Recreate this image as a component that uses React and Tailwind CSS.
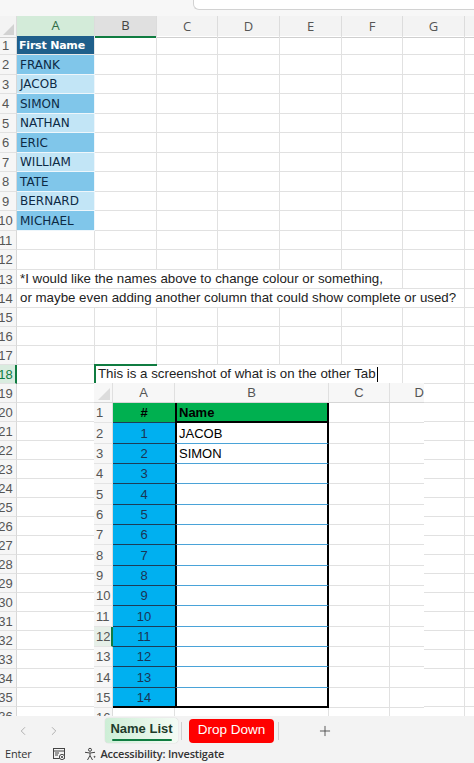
import React from "react";
import { ChevronLeft, ChevronRight, Plus } from "lucide-react";

const GRID = "grid grid-cols-[17px_78px_62px_61px_62px_62px_61px_62px_60px]";
const SPAN = {
  1: "col-span-1",
  2: "col-span-2",
  3: "col-span-3",
  4: "col-span-4",
  5: "col-span-5",
  6: "col-span-6",
  7: "col-span-7",
  8: "col-span-8",
};

const NAMES = ["FRANK", "JACOB", "SIMON", "NATHAN", "ERIC", "WILLIAM", "TATE", "BERNARD", "MICHAEL"];
const LETTERS = ["A", "B", "C", "D", "E", "F", "G", ""];

const cellBase = "h-full border-r border-b border-[#e1e1e1]";
const textCls = "pl-[3px] whitespace-nowrap text-[#222] text-[13.3px] leading-[16px]";

// build the cells of one outer row: [{span, node, cls}]
function rowCells(r) {
  const blanks = (n) => Array.from({ length: n }, () => ({ span: 1 }));
  if (r === 1) {
    return [
      {
        span: 1,
        cls: "bg-[#1f5f8b] border-[#e8e8e8]",
        node: (
          <span className="pl-[2px] whitespace-nowrap text-white font-bold text-[11px] tracking-[-0.2px] font-['DejaVu_Sans',sans-serif]">
            First Name
          </span>
        ),
      },
      ...blanks(7),
    ];
  }
  if (r >= 2 && r <= 10) {
    const even = r % 2 === 0;
    return [
      {
        span: 1,
        cls: (even ? "bg-[#80c6ea]" : "bg-[#c2e5f6]") + " border-[#eef6fb]",
        node: (
          <span className="pl-[3px] whitespace-nowrap text-[#0d2a45] text-[12px] font-['DejaVu_Sans',sans-serif]">
            {NAMES[r - 2]}
          </span>
        ),
      },
      ...blanks(7),
    ];
  }
  if (r === 13) {
    return [
      { span: 6, node: <span className={textCls}>*I would like the names above to change colour or something,</span> },
      ...blanks(2),
    ];
  }
  if (r === 14) {
    return [
      { span: 7, node: <span className={textCls}>or maybe even adding another column that could show complete or used?</span> },
      ...blanks(1),
    ];
  }
  if (r === 18) {
    return [
      { span: 1 },
      {
        span: 5,
        cls: "relative",
        node: (
          <>
            <div className="absolute left-[-1px] top-[-1px] w-[63px] h-[22px] border-t-2 border-l-2 border-[#107c41]" />
            <span className={textCls + " flex items-center"}>
              This is a screenshot of what is on the other Tab
              <span className="inline-block w-px h-[15px] bg-black ml-px" />
            </span>
          </>
        ),
      },
      ...blanks(2),
    ];
  }
  return blanks(8);
}

function OuterRow({ r }) {
  const sel = r === 18;
  const h = r % 2 === 0 && r <= 12 ? "h-[20px]" : "h-[19px]";
  return (
    <div className={GRID + " grid-rows-1 leading-none " + h}>
      <div
        className={
          "h-full overflow-hidden border-b border-[#e1e1e1] flex items-center " +
          (sel
            ? "bg-[#d9ecdf] border-r-2 border-r-[#107c41] text-[#107c41]"
            : "bg-[#f6f6f6] border-r border-r-[#d8d8d8] text-[#555]")
        }
      >
        <div className="w-[11px] shrink-0 flex justify-center text-[13px] leading-none">
          <span className="whitespace-nowrap">{r}</span>
        </div>
      </div>
      {rowCells(r).map((c, i) => (
        <div key={i} className={cellBase + " flex items-center overflow-visible " + SPAN[c.span] + " " + (c.cls || "")}>
          {c.node}
        </div>
      ))}
    </div>
  );
}

const EGRID = "grid grid-cols-[19px_62px_154px_61px_34px] grid-rows-1 leading-none";

function EmbeddedRow({ r }) {
  const head = r === 1;
  const last = r === 15;
  const sel = r === 12;
  const beyond = r > 15;
  const h = r % 3 === 2 ? "h-[21px]" : "h-[20px]";
  let aCls = "bg-[#00b0f0] border-b border-[#1d3d57]";
  let bCls = "bg-white border-b border-b-[#4aa3d8] border-l-2 border-r-2 border-l-black border-r-black";
  if (head) {
    aCls = "bg-[#00b050] border-b border-[#1d3d57]";
    bCls = "bg-[#00b050] border-b-2 border-b-black border-l-2 border-r-2 border-l-black border-r-black";
  }
  if (last) {
    aCls = "bg-[#00b0f0] border-b-2 border-black";
    bCls = "bg-white border-b-2 border-black border-l-2 border-r-2";
  }
  if (beyond) {
    aCls = "bg-white border-r border-b border-[#e1e1e1]";
    bCls = "bg-white border-r border-b border-[#e1e1e1]";
  }
  return (
    <div className={EGRID + " " + h}>
      <div
        className={
          "h-full flex items-center pl-[2px] text-[13px] text-[#555] border-b border-[#e4e4e4] " +
          (sel ? "bg-[#e6efe8] border-r-2 border-r-[#107c41]" : "bg-[#f7f7f7] border-r border-r-[#dcdcdc]")
        }
      >
        {r}
      </div>
      <div className={"h-full flex items-center justify-center text-[13px] " + aCls}>
        {head ? (
          <span className="font-bold text-black">#</span>
        ) : beyond ? null : (
          <span className="text-[#1a3556]">{r - 1}</span>
        )}
      </div>
      <div className={"h-full flex items-center pl-[2px] text-[13px] " + bCls}>
        {head ? <span className="font-bold text-black">Name</span> : r === 2 ? "JACOB" : r === 3 ? "SIMON" : null}
      </div>
      <div className="h-full border-r border-b border-[#e1e1e1]" />
      <div className="h-full border-b border-[#e1e1e1]" />
    </div>
  );
}

function Embedded() {
  return (
    <div className="absolute left-[94px] top-[383px] w-[330px] h-[333px] overflow-hidden bg-white font-['Liberation_Sans',Arial,sans-serif] text-black">
      <div className={EGRID + " h-[20px] bg-[#f7f7f7] border-b border-[#d6d6d6] text-[13px] text-[#555]"}>
        <div className="h-full relative border-r border-[#e0e0e0]">
          <div className="absolute right-[2px] bottom-[2px] w-0 h-0 border-l-[12px] border-l-transparent border-b-[12px] border-b-[#dcdcdc]" />
        </div>
        <div className="h-full flex items-center justify-center border-r border-[#e0e0e0]">A</div>
        <div className="h-full flex items-center justify-center border-r border-[#e0e0e0]">B</div>
        <div className="h-full flex items-center justify-center border-r border-[#e0e0e0]">C</div>
        <div className="h-full flex items-center justify-end">D</div>
      </div>
      {Array.from({ length: 16 }, (_, i) => (
        <EmbeddedRow key={i} r={i + 1} />
      ))}
    </div>
  );
}

function MacroIcon() {
  return (
    <svg width="14" height="14" viewBox="0 0 14 14" fill="none" stroke="#444" strokeWidth="1">
      <rect x="1.5" y="1.5" width="11" height="10" />
      <line x1="1.5" y1="4" x2="12.5" y2="4" />
      <line x1="3" y1="6" x2="7" y2="6" />
      <line x1="3" y1="8" x2="6" y2="8" />
      <circle cx="10" cy="10" r="2.6" fill="#fff" />
      <circle cx="10" cy="10" r="1.1" fill="#444" stroke="none" />
    </svg>
  );
}

function AccessIcon() {
  return (
    <svg width="14" height="14" viewBox="0 0 14 14" fill="none" stroke="#444" strokeWidth="1">
      <circle cx="7" cy="2.8" r="1.5" />
      <path d="M2 5.3 L7 6 L12 5.3" />
      <path d="M7 6 L7 8.5 L4.5 13" />
      <path d="M7 8.5 L9.5 13" />
      <path d="M11.5 8.5 l0.5 1 l1 0.3 l-1 0.4 l-0.5 1 l-0.4 -1 l-1 -0.4 l1 -0.3 z" fill="#444" stroke="none" />
    </svg>
  );
}

export default function App() {
  return (
    <div className="w-[474px] h-[763px] overflow-hidden bg-white flex flex-col font-['Liberation_Sans',Arial,sans-serif]">
      <div className="h-[716px] shrink-0 relative overflow-hidden">
        {/* formula strip edge */}
        <div className="h-[16px] bg-[#f7f7f7] flex">
          <div className="ml-[193px] flex-1 h-[10px] bg-white border-l border-b border-[#d2d2d2] rounded-bl-[6px]" />
        </div>
        {/* column headers */}
        <div className={GRID + " h-[20px] bg-[#f3f3f3] text-[13px] text-[#555] font-['Open_Sans',sans-serif]"}>
          <div className="h-full relative border-r border-[#dcdcdc] border-b border-b-[#d0d0d0]">
            <div className="absolute right-[2px] bottom-[2px] w-0 h-0 border-l-[11px] border-l-transparent border-b-[11px] border-b-[#d2d2d2]" />
          </div>
          {LETTERS.map((l, i) => (
            <div
              key={i}
              className={
                "h-full flex items-center justify-center border-r border-r-[#dcdcdc] " +
                (i === 0
                  ? "bg-[#d3ebd9] text-[#2f6b45] border-b-2 border-b-[#107c41]"
                  : i === 1
                  ? "bg-[#e0e0e0] text-[#444] border-b-2 border-b-[#107c41]"
                  : "border-b border-b-[#cfcfcf]")
              }
            >
              {l}
            </div>
          ))}
        </div>
        {Array.from({ length: 36 }, (_, i) => (
          <OuterRow key={i} r={i + 1} />
        ))}
        <Embedded />
      </div>

      {/* sheet tabs */}
      <div className="h-[29px] shrink-0 bg-[#f3f3f3] flex items-center font-['Liberation_Sans',Arial,sans-serif]">
        <ChevronLeft size={14} strokeWidth={1.3} className="ml-[16px] text-[#9a9a9a]" />
        <ChevronRight size={14} strokeWidth={1.3} className="ml-[17px] text-[#9a9a9a]" />
        <div className="ml-[44px] w-[73px] h-[25px] rounded-[4px] bg-gradient-to-r from-[#cdeed6] to-[#f4fbf5] shadow-[0_0_1px_rgba(0,0,0,0.3)] flex flex-col items-center justify-center">
          <span className="text-[13px] font-bold text-[#1d3b2a] leading-[16px] whitespace-nowrap">Name List</span>
          <span className="w-[60px] h-[2px] bg-[#107c41] rounded-full mt-[2px]" />
        </div>
        <div className="ml-[3px] w-px h-[18px] bg-[#d0d0d0]" />
        <div className="ml-[7px] w-[85px] h-[24px] rounded-[4px] bg-[#ff0000] flex items-center justify-center text-white text-[13.5px] whitespace-nowrap">
          Drop Down
        </div>
        <div className="ml-[4px] w-px h-[18px] bg-[#d0d0d0]" />
        <Plus size={16} strokeWidth={1.3} className="ml-[38px] text-[#444]" />
      </div>

      {/* status bar */}
      <div className="h-[18px] shrink-0 bg-[#f3f3f3] flex items-center text-[11px] text-[#333] font-['Open_Sans',sans-serif]">
        <span className="ml-[5px] tracking-[-0.2px]">Enter</span>
        <span className="ml-[21px] flex">
          <MacroIcon />
        </span>
        <span className="ml-[17px] flex">
          <AccessIcon />
        </span>
        <span className="ml-[3px] font-semibold tracking-[-0.2px] whitespace-nowrap">Accessibility: Investigate</span>
      </div>
    </div>
  );
}
